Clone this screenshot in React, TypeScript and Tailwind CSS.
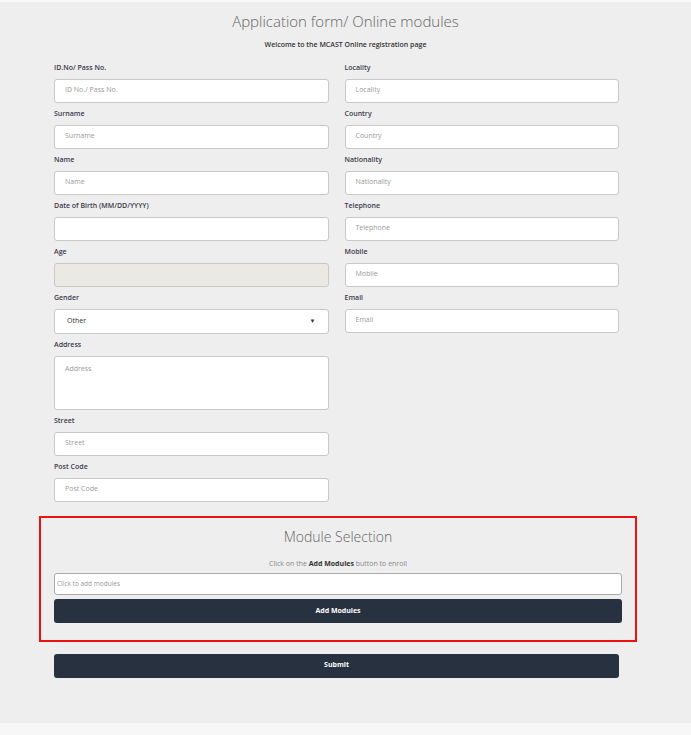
import React from "react";

const F = { fontFamily: "'Open Sans', 'Liberation Sans', sans-serif" };

function Field({ label, ph, h = "h-[24px]", disabled = false, area = false, select = false }: { label: string; ph?: string; h?: string; disabled?: boolean; area?: boolean; select?: boolean }) {
  return (
    <div className="flex flex-col">
      <div className="h-[13px] text-[7px] font-semibold text-[#3a3a4a] leading-[10px] mb-[3px] mt-[-3px]">{label}</div>
      {select ? (
        <div className={`${h} bg-white border border-[#c8c8c8] rounded-[3px] flex items-center justify-between px-[12px] text-[7px] text-[#333]`}>
          <span>Other</span><span className="text-[6px]">▼</span>
        </div>
      ) : (
        <div className={`${h} ${disabled ? "bg-[#eae9e4]" : "bg-white"} border border-[#c8c8c8] rounded-[3px] flex ${area ? "items-start pt-[7px]" : "items-center"} px-[10px] text-[7px] text-[#9a9a9a]`}>{ph}</div>
      )}
    </div>
  );
}

export default function App() {
  return (
    <div style={F} className="w-[691px] h-[735px] bg-[#f7f7f7]">
      <div className="h-[2px] bg-[#f7f7f7]" />
      <div className="bg-[#eeeeee] h-[721px] pt-[10px]">
        <div className="text-center text-[15px] text-[#666] font-light leading-[18px]">Application form/ Online modules</div>
        <div className="text-center text-[7px] font-semibold text-[#333] mt-[10px]">Welcome to the MCAST Online registration page</div>
        <div className="grid grid-cols-2 gap-x-[16px] px-[54px] pr-[72px] mt-[15px]">
          <div className="flex flex-col gap-[9px]">
            <Field label="ID.No/ Pass No." ph="ID No./ Pass No." />
            <Field label="Surname" ph="Surname" />
            <Field label="Name" ph="Name" />
            <Field label="Date of Birth (MM/DD/YYYY)" />
            <Field label="Age" disabled />
            <Field label="Gender" select h="h-[25px]" />
            <Field label="Address" ph="Address" area h="h-[54px]" />
            <Field label="Street" ph="Street" />
            <Field label="Post Code" ph="Post Code" />
          </div>
          <div className="flex flex-col gap-[9px]">
            <Field label="Locality" ph="Locality" />
            <Field label="Country" ph="Country" />
            <Field label="Nationality" ph="Nationality" />
            <Field label="Telephone" ph="Telephone" />
            <Field label="Mobile" ph="Mobile" />
            <Field label="Email" ph="Email" />
          </div>
        </div>
        <div className="mt-[14px] ml-[39px] w-[598px] h-[126px] border-2 border-[#ee1111] px-[13px] pt-[8px]">
          <div className="text-center text-[14px] font-light text-[#666]">Module Selection</div>
          <div className="text-center text-[7px] text-[#888] mt-[12px]">Click on the <b className="text-[#333]">Add Modules</b> button to enroll</div>
          <div className="mt-[4px] h-[22px] bg-white border border-[#aaa] rounded-[3px] flex items-center px-[2px] text-[6.5px] text-[#999]">Click to add modules</div>
          <div className="mt-[4px] h-[24px] bg-[#273140] rounded-[3px] flex items-center justify-center text-[7px] font-bold text-white">Add Modules</div>
        </div>
        <div className="mt-[12px] ml-[54px] w-[565px] h-[24px] bg-[#273140] rounded-[3px] flex items-center justify-center text-[7px] font-bold text-white">Submit</div>
      </div>
    </div>
  );
}
